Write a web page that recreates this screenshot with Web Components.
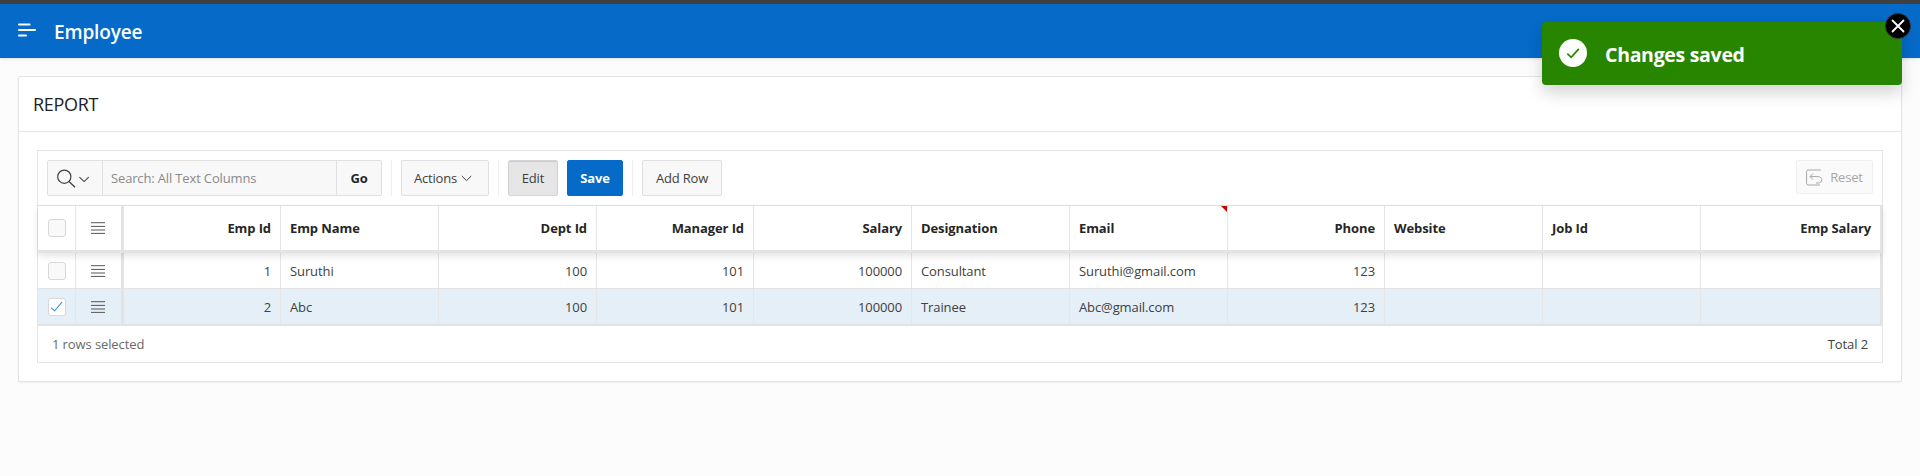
<!DOCTYPE html>
<html lang="en">
<head>
<meta charset="utf-8">
<title>Employee</title>
<style>
  html, body { margin: 0; height: 100%; }
  body {
    background: #fcfcfc;
    color: #262626;
    font-family: "Open Sans", "Noto Sans", "Liberation Sans", sans-serif;
    font-size: 13px;
    letter-spacing: -.2px;
    overflow: hidden;
  }
</style>
</head>
<body>
<app-header>Employee</app-header>
<app-toast>Changes saved</app-toast>
<main-body>
  <report-card heading="REPORT">
    <ig-region>
      <ig-toolbar></ig-toolbar>
      <ig-grid></ig-grid>
      <ig-footer></ig-footer>
    </ig-region>
  </report-card>
</main-body>

<script>
function make(name, html, setup) {
  customElements.define(name, class extends HTMLElement {
    constructor() {
      super();
      this.attachShadow({ mode: 'open' }).innerHTML = html;
    }
    connectedCallback() { if (setup) setup.call(this, this.shadowRoot); }
  });
}

make('app-header', `
  <style>
    :host { display: flex; align-items: center; height: 54px; border-top: 4px solid #404040;
      background: #056ac8; color: #fff; box-shadow: 0 1px 3px rgba(0,0,0,.12); position: relative; }
    svg { margin-left: 18px; width: 18px; height: 14px; flex: none; margin-top: -3px; }
    .t { margin-left: 18px; font-size: 19px; font-weight: 600; letter-spacing: -.15px; position: relative; top: 1px; }
  </style>
  <svg viewBox="0 0 18 14" fill="none" stroke="#fff" stroke-width="2" stroke-linecap="round">
    <path d="M1 1.4h10.6M1 7h16M1 12.6h7"/>
  </svg>
  <span class="t"><slot></slot></span>`);

make('app-toast', `
  <style>
    :host { position: absolute; left: 1542px; top: 22px; width: 360px; height: 63px; z-index: 5;
      display: flex; align-items: center; background: #288500; color: #fff; border-radius: 4px;
      box-shadow: 0 8px 16px rgba(0,0,0,.17); }
    .ok { margin-left: 17px; width: 28px; height: 28px; flex: none; margin-top: -1px; }
    .m { margin-left: 18px; font-size: 19.5px; font-weight: 700; letter-spacing: -.3px; position: relative; top: 1px; }
    .x { position: absolute; right: -9px; top: -9px; width: 26px; height: 26px; border-radius: 50%;
      background: #000; border: 1px solid #333; box-sizing: border-box; display: flex; align-items: center; justify-content: center; }
  </style>
  <svg class="ok" viewBox="0 0 28 28">
    <circle cx="14" cy="14" r="14" fill="#fff"/>
    <path d="M8.3 14.6l3.9 3.7 7.6-8.4" fill="none" stroke="#288500" stroke-width="1.7"/>
  </svg>
  <span class="m"><slot></slot></span>
  <span class="x"><svg width="14" height="14" viewBox="0 0 14 14"><path d="M1.5 1.5l11 11M12.5 1.5l-11 11" stroke="#fff" stroke-width="1.8" stroke-linecap="round"/></svg></span>`);

make('main-body', `
  <style>:host { display: block; padding: 18px; }</style><slot></slot>`);

make('report-card', `
  <style>
    :host { display: block; background: #fff; border: 1px solid #e4e4e4; border-radius: 2px; box-shadow: 0 1px 2px rgba(0,0,0,.06); }
    header { height: 54px; line-height: 54px; padding-left: 14px; font-size: 18px; font-weight: 400; color: #222; border-bottom: 1px solid #e6e6e6; letter-spacing: -.3px; }
    .b { padding: 18px; }
  </style>
  <header></header><div class="b"><slot></slot></div>`,
  function (r) { r.querySelector('header').textContent = this.getAttribute('heading'); });

make('ig-region', `
  <style>:host { display: block; border: 1px solid #e4e4e4; }</style><slot></slot>`);

make('ig-toolbar', `
  <style>
    :host { display: flex; align-items: flex-start; height: 55px; box-sizing: border-box; padding: 9px 9px 0 9px; border-bottom: 1px solid #e2e2e2; }
    .grp { display: flex; height: 36px; width: 335px; box-sizing: border-box; border: 1px solid #e0e0e0; border-radius: 2px; background: #f8f8f8; }
    .mag { width: 54px; flex: none; border-right: 1px solid #e0e0e0; position: relative; }
    .mag svg { position: absolute; left: 7px; top: 7px; }
    .inp { flex: 1; line-height: 34px; padding-left: 8px; color: #8a8a8a; letter-spacing: -.15px; }
    .go { width: 44px; flex: none; border-left: 1px solid #e0e0e0; text-align: center; line-height: 34px; font-weight: 700; color: #262626; }
    .sep { width: 1px; height: 36px; background: #eee; flex: none; }
    .btn { height: 36px; box-sizing: border-box; border: 1px solid #e0e0e0; border-radius: 2px; background: #f8f8f8; display: flex; align-items: center; justify-content: center; color: #404040; flex: none; }
    .act { width: 88px; margin: 0 9px 0 0; gap: 4px; justify-content: flex-start; padding-left: 12px; }
    .edit { width: 50px; background: #e6e6e6; border-color: #d4d4d4; box-shadow: inset 0 1px 1px rgba(0,0,0,.12); }
    .save { width: 56px; background: #056ac8; border-color: #056ac8; color: #fff; font-weight: 700; }
    .add { width: 80px; }
    .reset { margin-left: auto; width: 77px; height: 34px; background: #fafafa; border-color: #efefef; color: #a6a6a6; gap: 7px; }
  </style>
  <div class="grp">
    <div class="mag"><svg width="38" height="22" viewBox="0 0 38 22" fill="none" stroke="#404040">
      <circle cx="9.3" cy="8.7" r="6.6" stroke-width="1.2"/><path d="M14 13.6l6 5.6" stroke-width="1.3"/>
      <path d="M24.5 9.2l4.6 4.4 4.6-4.4" stroke-width="1.1"/></svg></div>
    <div class="inp">Search: All Text Columns</div>
    <div class="go">Go</div>
  </div>
  <div class="sep" style="margin:0 9px"></div>
  <div class="btn act">Actions<svg width="11" height="7" viewBox="0 0 11 7" fill="none" stroke="#404040" stroke-width="1"><path d="M.8 1l4.7 4.6L10.2 1"/></svg></div>
  <div class="sep" style="margin-right:9px"></div>
  <div class="btn edit">Edit</div>
  <div class="btn save" style="margin-left:9px">Save</div>
  <div class="sep" style="margin:0 9px"></div>
  <div class="btn add">Add Row</div>
  <div class="btn reset"><svg width="17" height="17" viewBox="0 0 17 17" fill="none" stroke="#a6a6a6" stroke-width="1"><path d="M14.8 1H2C1.2 1 .6 1.6 .6 2.4v12.2c0 .8.6 1.4 1.4 1.4h12"/><path d="M7 4.6L4 7.6l3 3M4 7.6h8.2c2 0 3.6 1.4 3.6 3.1 0 1.8-1.6 3.3-3.6 3.3H10"/></svg>Reset</div>`);

const COLS = '38px 48px 157px 158px 158px 157px 158px 158px 158px 157px 158px 158px 181px';

make('ig-check', `
  <style>
    :host { display: block; width: 18px; height: 18px; box-sizing: border-box; border: 1px solid #d8d8d8; border-radius: 3px; background: #f9f9f9; }
    :host([checked]) { background: #fff; }
    svg { display: none; }
    :host([checked]) svg { display: block; }
  </style>
  <svg width="16" height="16" viewBox="0 0 16 16" fill="none" stroke="#3d8ee0" stroke-width="1.1"><path d="M2 8.6l3.6 3.2L13 3.2"/></svg>`);

make('ig-bars', `
  <style>:host { display: block; width: 14px; height: 12px; margin-left: -1px; }</style>
  <svg width="14" height="12" viewBox="0 0 14 12" style="display:block" stroke="#555" stroke-width="1"><path d="M0 .7h14M0 4.4h14M0 8h14M0 11.4h14"/></svg>`);

make('ig-cell', `
  <style>
    :host { display: flex; align-items: center; box-sizing: border-box; padding: 0 9px 0 9px; border-right: 1px solid #e6e6e6; min-width: 0; white-space: nowrap; position: relative; }
    :host([right]) { justify-content: flex-end; }
    :host([tool]) { justify-content: center; padding: 0; }
    :host([frozen]) { border-right: 3px solid #e3e3e3; }
    :host([last]) { border-right: 2px solid #e3e3e3; }
    :host([mark])::after { content: ""; position: absolute; right: 0; top: 0; border-style: solid; border-width: 0 6px 6px 0; border-color: transparent #c80000 transparent transparent; }
  </style><slot></slot>`);

make('ig-row', `
  <style>
    :host { display: grid; grid-template-columns: ${COLS}; box-sizing: border-box; color: #404040; }
    :host([head]) { height: 47px; border-bottom: 3px solid #e3e3e3; font-weight: 700; color: #262626; position: relative; z-index: 1; box-shadow: 0 3px 7px rgba(0,0,0,.11); background: #fff; }
    :host([body]) { height: 36px; border-bottom: 1px solid #e4e4e4; }
    :host([sel]) { background: #e5eff8; height: 37px; border-bottom: 2px solid #e3e3e3; }
  </style><slot></slot>`);

make('ig-grid', `<style>:host { display: block; letter-spacing: -.1px; }</style><div id="g"></div>`, function (r) {
  if (r.getElementById('g').children.length) return;
  const head = [['Emp Id',1],['Emp Name',0],['Dept Id',1],['Manager Id',1],['Salary',1],['Designation',0],['Email',0,1],['Phone',1],['Website',0],['Job Id',0],['Emp Salary',1]];
  const rows = [
    ['1','Suruthi','100','101','100000','Consultant','Suruthi@gmail.com','123','','',''],
    ['2','Abc','100','101','100000','Trainee','Abc@gmail.com','123','','','']
  ];
  const rowHtml = (attr, first, cells) => `<ig-row ${attr}><ig-cell tool>${first}</ig-cell><ig-cell tool frozen><ig-bars></ig-bars></ig-cell>${cells}</ig-row>`;
  let html = rowHtml('head', '<ig-check></ig-check>', head.map((h, i) =>
    `<ig-cell ${h[1] ? 'right' : ''} ${h[2] ? 'mark' : ''} ${i === 10 ? 'last' : ''}>${h[0]}</ig-cell>`).join(''));
  rows.forEach((d, n) => {
    html += rowHtml(n ? 'body sel' : 'body', n ? '<ig-check checked></ig-check>' : '<ig-check></ig-check>',
      d.map((v, i) => `<ig-cell ${head[i][1] ? 'right' : ''} ${i === 10 ? 'last' : ''}>${v}</ig-cell>`).join(''));
  });
  r.getElementById('g').innerHTML = html;
});

make('ig-footer', `
  <style>
    :host { display: flex; justify-content: space-between; align-items: center; height: 36px; padding: 0 14px; color: #6a6a6a; letter-spacing: -.1px; }
    .r { color: #404040; }
  </style>
  <span>1 rows selected</span><span class="r">Total 2</span>`);
</script>
</body>
</html>
